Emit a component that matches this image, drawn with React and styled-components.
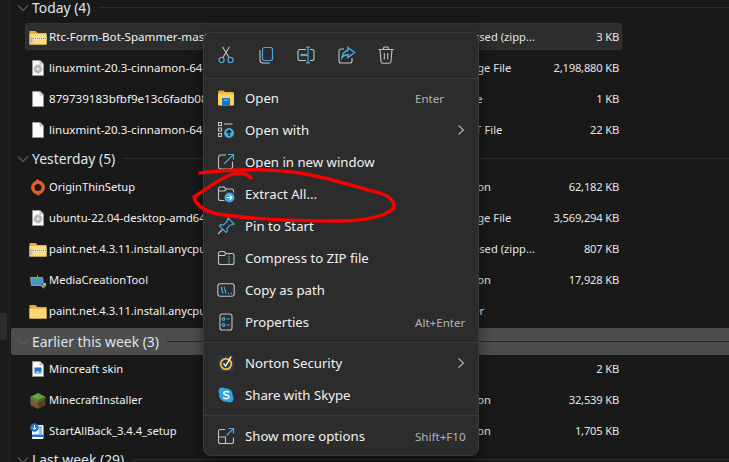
import React from "react";
import styled, { createGlobalStyle } from "styled-components";

const Global = createGlobalStyle`
  html, body { margin: 0; padding: 0; background: #191919; }
  body { width: 729px; height: 462px; overflow: hidden; font-family: "Noto Sans", "Open Sans", sans-serif; }
`;

const Page = styled.div`
  position: relative;
  display: flex;
  width: 729px;
  height: 462px;
  overflow: hidden;
  background: #191919;
`;
const NavPane = styled.div`
  flex: 0 0 9px;
  background: #1b1b1b;
  border-right: 1px solid #262626;
  padding-top: 313px;
  box-sizing: content-box;
`;
const NavPill = styled.div`
  width: 7px;
  height: 27px;
  background: #2d2d2d;
  border-radius: 0 3px 3px 0;
`;
const FileList = styled.div`
  flex: 1;
  min-width: 0;
  margin-top: -6px;
  padding-left: 1px;
`;
const GroupBlock = styled.section`
  margin-bottom: ${(p) => p.$space}px;
`;
const GroupHeader = styled.div`
  display: flex;
  align-items: center;
  height: 27px;
  margin-bottom: ${(p) => p.$after}px;
  padding-left: 6px;
  color: #dde6f0;
  background: ${(p) => (p.$active ? "#4d4d4d" : "transparent")};
  border-radius: 2px 0 0 2px;
  font-size: 13.9px;
`;
const Caret = styled.svg`
  flex: 0 0 12px;
  width: 12px;
  height: 12px;
  margin-right: 3px;
`;
const HeaderRule = styled.div`
  flex: 1;
  height: 1px;
  margin-left: 8px;
  background: ${(p) => (p.$active ? "#2a2a2a" : "#2c2c2c")};
`;
const FileRow = styled.div`
  display: grid;
  grid-template-columns: 20px 383px 1fr auto;
  align-items: center;
  box-sizing: border-box;
  width: 597px;
  height: 27px;
  margin: 0 0 4px 14px;
  padding: 0 2px 0 3px;
  color: #f2f2f2;
  font-size: 11.2px;
  background: ${(p) => (p.$selected ? "#2d2d2d" : "transparent")};
  border: 1px solid ${(p) => (p.$selected ? "#333" : "transparent")};
  border-radius: 2px;
  &:last-child { margin-bottom: 0; }
`;
const FileGlyph = styled.svg`
  width: 18px;
  height: 18px;
`;
const FileName = styled.span`
  white-space: nowrap;
  overflow: hidden;
  font-size: ${(p) => (p.$long ? "11.6px" : "11.2px")};
`;
const FileType = styled.span`
  color: #e4e4e4;
  white-space: nowrap;
`;
const FileSize = styled.span`
  color: #e4e4e4;
  text-align: right;
  letter-spacing: -0.2px;
`;

const Menu = styled.div`
  position: absolute;
  left: 203px;
  top: 32px;
  box-sizing: border-box;
  width: 276px;
  height: 424px;
  background: #2c2c2c;
  border: 1px solid #3b3b3b;
  border-radius: 8px;
  box-shadow: 0 4px 14px rgba(0, 0, 0, 0.45);
  color: #f1f1f1;
`;
const Toolbar = styled.div`
  display: flex;
  box-sizing: border-box;
  height: 46px;
  padding: 0 0 2px 2px;
  border-bottom: 1px solid #3c3c3c;
`;
const ToolButton = styled.div`
  flex: 0 0 40px;
  display: flex;
  align-items: center;
  justify-content: center;
`;
const ItemGroup = styled.div`
  padding: ${(p) => (p.$first ? "3px" : "4px")} 0 4px;
  border-bottom: ${(p) => (p.$last ? "none" : "1px solid #3c3c3c")};
`;
const Item = styled.div`
  display: flex;
  align-items: center;
  height: 32px;
  padding-left: 12px;
  font-size: 13.2px;
`;
const ItemIcon = styled.svg`
  flex: 0 0 20px;
  width: 20px;
  height: 20px;
  margin-right: 9px;
`;
const ToolIcon = styled.svg`
  width: 20px;
  height: 20px;
`;
const ItemLabel = styled.span`
  flex: 0 0 170px;
  white-space: nowrap;
`;
const Shortcut = styled.span`
  color: #b4b4b4;
  font-size: 11.6px;
  white-space: nowrap;
`;
const SubArrow = styled.svg`
  width: 10px;
  height: 12px;
  margin-left: 41px;
`;
const Annotation = styled.svg`
  position: absolute;
  left: 0;
  top: 0;
  pointer-events: none;
`;

const B = "#4aa8dc";
const G = "#c4c4c4";

const line = { fill: "none", stroke: G, strokeWidth: 1.1 };
const blue = { fill: "none", stroke: B, strokeWidth: 1.2 };

const ZipFolder = () => (
  <>
    <path d="M0.5 3 h6 l2 2 h9 v11.5 h-17z" fill="#e8b23a" />
    <rect x="0.5" y="6" width="17" height="10.5" fill="#fbdc7c" />
    <rect x="2" y="9" width="15.5" height="3" fill="#e2e0d2" />
    <path d="M2 10.5h15.5" stroke="#8b8b80" strokeWidth="1.2" strokeDasharray="1 1" />
    <rect x="1" y="9" width="2.6" height="6" fill="#bdbdb0" />
  </>
);
const Folder = () => (
  <>
    <path d="M0.5 3 h6 l2 2 h9 v11.5 h-17z" fill="#e4a92f" />
    <rect x="0.5" y="6.5" width="17" height="10" fill="#f9d873" />
  </>
);
const Page1 = ({ children, stroke = "#9a9a9a" }) => (
  <>
    <path d="M3.5 1.5 h7.5 l3.5 3.5 v11.5 h-11z" fill="#fbfbfb" stroke={stroke} strokeWidth="0.8" />
    <path d="M11 1.5 v3.5 h3.5" fill="#dcdcdc" stroke={stroke} strokeWidth="0.6" />
    {children}
  </>
);
const Disc = () => (
  <Page1>
    <circle cx="9" cy="10" r="4.4" fill="#b8b8b8" />
    <circle cx="9" cy="10" r="1.3" fill="#eee" />
  </Page1>
);
const Origin = () => (
  <>
    <circle cx="9" cy="9.5" r="5.2" fill="none" stroke="#e0602a" strokeWidth="3.4" />
    <path d="M8 0.8 l3.5 3 h-5z M9.5 18 l-3-3 h5z" fill="#e0602a" />
  </>
);
const MediaTool = () => (
  <>
    <path d="M1.5 6.5 h12 l1 8 h-12z" fill="#4a8fd6" stroke="#9dc4ea" strokeWidth="0.7" />
    <path d="M9 1.5 v6 h2.5 l-4 4 -3-4 h2.5 l2-5z" fill="#35c04a" />
    <path d="M12 12 h5 v3 l-2.5 2.5 -2.5-2.5z" fill="#f2b632" />
    <path d="M12 12 h2.5 v2.5 h-2.5z M14.5 14.5 h2.5 l-2.5 3z" fill="#2f6fc0" />
  </>
);
const ImageFile = () => (
  <Page1>
    <rect x="5.5" y="7.5" width="7" height="6" fill="#1f72c8" />
    <path d="M5.5 13.5 l3-3 2 2 1-1 1 2z" fill="#9fd2f7" />
  </Page1>
);
const Block = () => (
  <>
    <path d="M9 2 l7.5 3.8 -7.5 3.8 -7.5 -3.8z" fill="#6aa53c" />
    <path d="M1.5 5.8 l7.5 3.8 v8.4 l-7.5-3.8z" fill="#7d5638" />
    <path d="M16.5 5.8 l-7.5 3.8 v8.4 l7.5-3.8z" fill="#5b3d28" />
    <path d="M1.5 5.8 l7.5 3.8 v2 l-7.5-3.8z" fill="#55892f" />
    <path d="M16.5 5.8 l-7.5 3.8 v2 l7.5-3.8z" fill="#43702a" />
  </>
);
const Installer = () => (
  <>
    <rect x="3" y="3" width="11.5" height="14" rx="1" fill="#f4f7fb" />
    <path d="M10 5 h3 M10 7 h3 M10 9 h3 M10 11 h3" stroke="#2f7fd3" strokeWidth="1" />
    <rect x="3" y="12.5" width="11.5" height="2.5" fill="#1f76d0" />
    <circle cx="5.5" cy="5.5" r="4.3" fill="#1f76d0" />
    <path d="M5.5 3 v4 M3.8 5.6 l1.7 1.7 1.7-1.7" stroke="#fff" strokeWidth="1" fill="none" />
  </>
);

const Ic = {
  Cut: () => (
    <>
      <path d="M6.8 12.8 L13.5 1.8 M13.2 12.8 L6.5 1.8" {...line} />
      <circle cx="5.5" cy="15" r="2.6" {...blue} />
      <circle cx="14.5" cy="15" r="2.6" {...blue} />
    </>
  ),
  Copy: () => (
    <>
      <rect x="6.5" y="2.5" width="10" height="13" rx="2" {...blue} />
      <path d="M4 5 v10 a3 3 0 0 0 3 3 h7" {...line} />
    </>
  ),
  Rename: () => (
    <>
      <path d="M10 4.5 h-6 a2 2 0 0 0 -2 2 v7 a2 2 0 0 0 2 2 h6 M14 4.5 h2 a2 2 0 0 1 2 2 v7 a2 2 0 0 1 -2 2 h-2" {...line} />
      <path d="M12 2.5 v15 M10 2.2 h4 M10 17.8 h4" {...blue} />
      <path d="M4.5 10 h7" stroke={B} strokeWidth="2.2" />
    </>
  ),
  Share: () => (
    <>
      <path d="M8 4 h-3 a2 2 0 0 0 -2 2 v10 a2 2 0 0 0 2 2 h9 a2 2 0 0 0 2 -2 v-3" {...line} />
      <path d="M12 2.5 l6.5 5 -6.5 5 v-3 c-3 0 -4.5 1 -6 3 c0.5 -4 3 -6.5 6 -7z" {...blue} strokeWidth="1.5" />
    </>
  ),
  Trash: () => (
    <>
      <path d="M2.5 4.5 h15 M7.5 4 v-1 a1 1 0 0 1 1 -1 h3 a1 1 0 0 1 1 1 v1" {...line} />
      <path d="M4 4.5 l1 12 a2 2 0 0 0 2 1.7 h6 a2 2 0 0 0 2 -1.7 l1 -12" {...line} />
      <path d="M8.3 8 v6.5 M11.7 8 v6.5" {...line} />
    </>
  ),
  Open: () => (
    <>
      <path d="M2 4 a1.5 1.5 0 0 1 1.5 -1.5 h4 l2 2 h-7.5z" fill="#e3a626" />
      <rect x="2" y="4" width="16" height="13" rx="1.5" fill="#f0b93a" />
      <rect x="2" y="6" width="16" height="11.5" rx="1" fill="#fcd560" />
      <rect x="6" y="10" width="8" height="7.5" fill="#1673c8" />
      <rect x="7.5" y="11.5" width="5" height="1.3" fill="#6db5ee" />
    </>
  ),
  OpenWith: () => (
    <>
      <rect x="2.5" y="2.5" width="3" height="3" {...line} />
      <rect x="2.5" y="8" width="3" height="3" {...line} />
      <rect x="2.5" y="13.5" width="3" height="3" {...line} />
      <path d="M8 4 h8.5" {...line} />
      <circle cx="13" cy="13" r="5" fill={B} />
      <path d="M13 16 v-5.5 M10.8 12.5 l2.2 -2.2 2.2 2.2" stroke="#161616" strokeWidth="1.3" fill="none" />
    </>
  ),
  NewWindow: () => (
    <>
      <path d="M10 3 h-5 a2.5 2.5 0 0 0 -2.5 2.5 v9 a2.5 2.5 0 0 0 2.5 2.5 h9 a2.5 2.5 0 0 0 2.5 -2.5 v-5" {...line} />
      <path d="M8 12 L17.5 2.5 M12 2.5 h5.5 v5.5" {...blue} />
    </>
  ),
  Extract: () => (
    <>
      <path d="M8.5 16.5 h-4 a2 2 0 0 1 -2 -2 v-9.5 a2 2 0 0 1 2 -2 h3.5 l2 2 h5.5 a2 2 0 0 1 2 2 v1.5 M2.5 7 h6 l2 -2" {...line} />
      <circle cx="13.5" cy="13.5" r="5" fill={B} />
      <path d="M10.8 13.5 h5 M13.8 11.3 l2.1 2.2 -2.1 2.2" stroke="#fff" strokeWidth="1.2" fill="none" />
    </>
  ),
  Pin: () => (
    <>
      <path d="M12 2 l6 6 -4 1.2 -3 3.3 0.3 3 -1.3 1 -6.5 -6.5 1 -1.3 3 0.3 3.3 -3z" {...blue} />
      <path d="M6.5 13.5 L2 18" {...line} />
    </>
  ),
  Zip: () => (
    <>
      <path d="M4.5 3.5 h3.5 l2 2 h6 a2 2 0 0 1 2 2 v7 a2 2 0 0 1 -2 2 h-11.5 a2 2 0 0 1 -2 -2 v-9 a2 2 0 0 1 2 -2z M2.5 7.5 h6 l1.5 -2" {...line} />
      <path d="M13 5.5 v11" stroke={B} strokeWidth="1.4" strokeDasharray="1.4 1" />
    </>
  ),
  Path: () => (
    <>
      <rect x="1.8" y="3.8" width="16.4" height="12.4" rx="2.4" {...line} />
      <path d="M5 6.5 l2 7 M8 6.5 l2 7" {...blue} />
      <path d="M12 13.5 h1 M15 13.5 h1" stroke={B} strokeWidth="1.3" />
    </>
  ),
  Props: () => (
    <>
      <rect x="4" y="2" width="12" height="16" rx="2" {...line} />
      <circle cx="7.5" cy="7" r="1.3" {...blue} />
      <circle cx="7.5" cy="13" r="1.3" {...blue} />
      <path d="M10.5 7 h3.5 M10.5 13 h3.5" {...blue} />
    </>
  ),
  Norton: () => (
    <>
      <rect x="2" y="2" width="16" height="16" fill="#27384d" />
      <circle cx="10" cy="11" r="5.3" fill="none" stroke="#f5b324" strokeWidth="2" />
      <path d="M7.5 10.5 l2.2 2.5 5.5 -9.5" fill="none" stroke="#fff" strokeWidth="1.4" />
    </>
  ),
  Skype: () => (
    <>
      <circle cx="10" cy="10" r="6.8" fill="#2ca5e0" />
      <circle cx="6.2" cy="6.2" r="3.7" fill="#2ca5e0" />
      <circle cx="13.8" cy="13.8" r="3.7" fill="#2ca5e0" />
      <path d="M12.8 7.5 c-0.8 -1.2 -4.9 -1.6 -5.1 0.6 c-0.2 2.4 5.4 1.4 5.2 3.9 c-0.2 2.3 -4.6 2 -5.6 0.5" fill="none" stroke="#fff" strokeWidth="1.4" />
    </>
  ),
  More: () => (
    <>
      <path d="M9 3.5 h-4.5 a2 2 0 0 0 -2 2 v10 a2 2 0 0 0 2 2 h11 a2 2 0 0 0 2 -2 v-4 M2.5 11 h7 v6.5" {...line} />
      <path d="M10.5 9.5 L17.5 2.5 M12.5 2.5 h5 v5" {...blue} />
    </>
  ),
};

const groups = [
  {
    title: "Today (4)", after: 2, space: 2,
    rows: [
      { icon: ZipFolder, name: "Rtc-Form-Bot-Spammer-master", type: "Compressed (zipp...", size: "3 KB", selected: true, long: true },
      { icon: Disc, name: "linuxmint-20.3-cinnamon-64bit", type: "Disc Image File", size: "2,198,880 KB", long: true },
      { icon: Page1, name: "879739183bfbf9e13c6fadb086", type: "HASH File", size: "1 KB", long: true },
      { icon: Page1, name: "linuxmint-20.3-cinnamon-64bit", type: "TORRENT File", size: "22 KB", long: true },
    ],
  },
  {
    title: "Yesterday (5)", after: 1, space: 4,
    rows: [
      { icon: Origin, name: "OriginThinSetup", type: "Application", size: "62,182 KB" },
      { icon: Disc, name: "ubuntu-22.04-desktop-amd64", type: "Disc Image File", size: "3,569,294 KB" },
      { icon: ZipFolder, name: "paint.net.4.3.11.install.anycpu", type: "Compressed (zipp...", size: "807 KB" },
      { icon: MediaTool, name: "MediaCreationTool", type: "Application", size: "17,928 KB" },
      { icon: Folder, name: "paint.net.4.3.11.install.anycpu", type: "File folder", size: "" },
    ],
  },
  {
    title: "Earlier this week (3)", after: 0, space: 2, active: true,
    rows: [
      { icon: ImageFile, name: "Mincreaft skin", type: "", size: "2 KB" },
      { icon: Block, name: "MinecraftInstaller", type: "Application", size: "32,539 KB" },
      { icon: Installer, name: "StartAllBack_3.4.4_setup", type: "Application", size: "1,705 KB" },
    ],
  },
  { title: "Last week (29)", after: 0, space: 0, rows: [] },
];

const tools = [Ic.Cut, Ic.Copy, Ic.Rename, Ic.Share, Ic.Trash];
const menuGroups = [
  [
    { icon: Ic.Open, label: "Open", key: "Enter" },
    { icon: Ic.OpenWith, label: "Open with", sub: true },
    { icon: Ic.NewWindow, label: "Open in new window" },
    { icon: Ic.Extract, label: "Extract All..." },
    { icon: Ic.Pin, label: "Pin to Start" },
    { icon: Ic.Zip, label: "Compress to ZIP file" },
    { icon: Ic.Path, label: "Copy as path" },
    { icon: Ic.Props, label: "Properties", key: "Alt+Enter" },
  ],
  [
    { icon: Ic.Norton, label: "Norton Security", sub: true },
    { icon: Ic.Skype, label: "Share with Skype" },
  ],
  [{ icon: Ic.More, label: "Show more options", key: "Shift+F10" }],
];

export default function App() {
  return (
    <Page>
      <Global />
      <NavPane>
        <NavPill />
      </NavPane>
      <FileList>
        {groups.map((g) => (
          <GroupBlock key={g.title} $space={g.space}>
            <GroupHeader $after={g.after} $active={g.active}>
              <Caret viewBox="0 0 12 12">
                <path d="M1 3.5 L6 8.5 L11 3.5" fill="none" stroke="#5c5c5c" strokeWidth="1.1" />
              </Caret>
              <span>{g.title}</span>
              <HeaderRule $active={g.active} />
            </GroupHeader>
            {g.rows.map((r, i) => (
              <FileRow key={i} $selected={r.selected}>
                <FileGlyph viewBox="0 0 18 18"><r.icon /></FileGlyph>
                <FileName $long={r.long}>{r.name}</FileName>
                <FileType>{r.type}</FileType>
                <FileSize>{r.size}</FileSize>
              </FileRow>
            ))}
          </GroupBlock>
        ))}
      </FileList>
      <Menu>
        <Toolbar>
          {tools.map((T, i) => (
            <ToolButton key={i}>
              <ToolIcon viewBox="0 0 20 20"><T /></ToolIcon>
            </ToolButton>
          ))}
        </Toolbar>
        {menuGroups.map((items, gi) => (
          <ItemGroup key={gi} $first={gi === 0} $last={gi === menuGroups.length - 1}>
            {items.map((it) => (
              <Item key={it.label}>
                <ItemIcon viewBox="0 0 20 20"><it.icon /></ItemIcon>
                <ItemLabel>{it.label}</ItemLabel>
                {it.key && <Shortcut>{it.key}</Shortcut>}
                {it.sub && (
                  <SubArrow viewBox="0 0 10 12">
                    <path d="M2.5 1.5 L7.5 6 L2.5 10.5" fill="none" stroke="#b5b5b5" strokeWidth="1.1" />
                  </SubArrow>
                )}
              </Item>
            ))}
          </ItemGroup>
        ))}
      </Menu>
      <Annotation width="729" height="462" viewBox="0 0 729 462">
        <path
          d="M200 173 C 225 170, 265 168, 300 173 C 330 178, 360 188, 380 193 C 392 197, 396 204, 393 209 C 385 216, 365 221, 340 221 C 300 221, 250 219, 217 214 C 205 211, 196 205, 194 197 C 205 190, 220 178, 233 174 C 240 172, 248 174, 251 178"
          fill="none"
          stroke="#fb0000"
          strokeWidth="3.4"
          strokeLinecap="round"
        />
      </Annotation>
    </Page>
  );
}
